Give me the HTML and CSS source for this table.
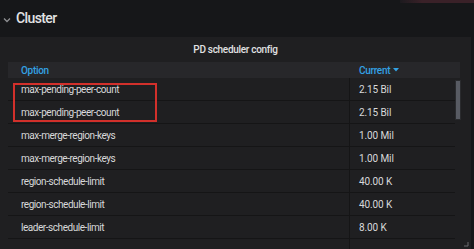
FILE: index.html
```html
<!DOCTYPE html>
<html>
<head>
<meta charset="utf-8">
<link rel="stylesheet" href="styles.css">
</head>
<body>
<div class="page">
  <div class="topglow"></div>
  <div class="row-title">
    <svg class="chev" width="8" height="6" viewBox="0 0 8 6"><path d="M1 1.5 L4 4.5 L7 1.5" fill="none" stroke="#8e8f92" stroke-width="1.3"/></svg>
    <span class="row-name">Cluster</span>
  </div>
  <div class="panel">
    <div class="panel-title">PD scheduler config</div>
    <div class="table">
      <div class="thead">
        <div class="th c1">Option</div>
        <div class="th c2">Current<svg class="caret" width="6" height="4" viewBox="0 0 6 4"><path d="M0 0 L6 0 L3 3.5 Z" fill="#33a2e5"/></svg></div>
      </div>
      <div class="tbody">
        <div class="tr"><div class="td c1">max-pending-peer-count</div><div class="td c2">2.15 Bil</div></div>
        <div class="tr"><div class="td c1">max-pending-peer-count</div><div class="td c2">2.15 Bil</div></div>
        <div class="tr"><div class="td c1">max-merge-region-keys</div><div class="td c2">1.00 Mil</div></div>
        <div class="tr"><div class="td c1">max-merge-region-keys</div><div class="td c2">1.00 Mil</div></div>
        <div class="tr"><div class="td c1">region-schedule-limit</div><div class="td c2">40.00 K</div></div>
        <div class="tr"><div class="td c1">region-schedule-limit</div><div class="td c2">40.00 K</div></div>
        <div class="tr"><div class="td c1">leader-schedule-limit</div><div class="td c2">8.00 K</div></div>
        <div class="tr"><div class="td c1"></div><div class="td c2"></div></div>
        <div class="scrollthumb"></div>
        <div class="highlight"></div>
      </div>
    </div>
    <svg class="resize" width="6" height="6" viewBox="0 0 6 6"><path d="M5 1 L5 5 L1 5" fill="none" stroke="#6a6b6e" stroke-width="1"/></svg>
  </div>
</div>
</body>
</html>
```
FILE: styles.css
```css
html, body {
  margin: 0;
  padding: 0;
  background: #161719;
}
.page {
  position: relative;
  width: 474px;
  height: 249px;
  overflow: hidden;
  background: #161719;
  font-family: Roboto, "Liberation Sans", sans-serif;
  color: #d8d9da;
}
.topglow {
  position: absolute;
  top: 0;
  left: 400px;
  width: 74px;
  height: 3px;
  background: linear-gradient(to right, #1c1a1e, #3a2128 30%, #3a2128);
}
.row-title {
  height: 37px;
  display: flex;
  align-items: center;
  padding-left: 3px;
  box-sizing: border-box;
  padding-bottom: 1px;
}
.chev {
  margin-top: 3px;
}
.row-name {
  margin-left: 5px;
  font-size: 14px;
  font-weight: 500;
  letter-spacing: -0.6px;
  color: #e2e3e4;
}
.panel {
  position: relative;
  background: #1f1f21;
  width: 471px;
  height: 212px;
}
.panel-title {
  height: 25px;
  display: flex;
  align-items: center;
  justify-content: center;
  font-size: 10px;
  font-weight: 500;
  letter-spacing: -0.3px;
  color: #e0e1e2;
  box-sizing: border-box;
}
.table {
  margin-left: 8px;
  width: 452px;
}
.thead {
  display: flex;
  height: 16px;
  background: #27272a;
  align-items: center;
}
.th {
  display: flex;
  align-items: center;
  color: #33a2e5;
  font-size: 10px;
  font-weight: 500;
  letter-spacing: -0.3px;
}
.caret {
  margin-left: 3px;
}
.c1 {
  width: 342px;
  padding-left: 13px;
  box-sizing: border-box;
}
.c2 {
  padding-left: 9px;
  flex: 1;
}
.tbody {
  position: relative;
  width: 447px;
}
.tr {
  display: flex;
  height: 23px;
  border-bottom: 1px solid #151516;
  box-sizing: border-box;
}
.td {
  display: flex;
  align-items: center;
  font-size: 10px;
  letter-spacing: -0.45px;
  color: #d8d9da;
}
.td.c1 {
  border-right: 1px solid #151516;
}
.td.c2 {
  letter-spacing: -0.1px;
}
.scrollthumb {
  position: absolute;
  left: 447px;
  top: 2px;
  width: 4px;
  height: 38px;
  background: #585b63;
  border: 1px solid #2a2b2e;
}
.highlight {
  position: absolute;
  left: 5px;
  top: 5px;
  width: 140px;
  height: 35px;
  border: 2px solid #d2302b;
}
.resize {
  position: absolute;
  right: 2px;
  bottom: 2px;
}
```
